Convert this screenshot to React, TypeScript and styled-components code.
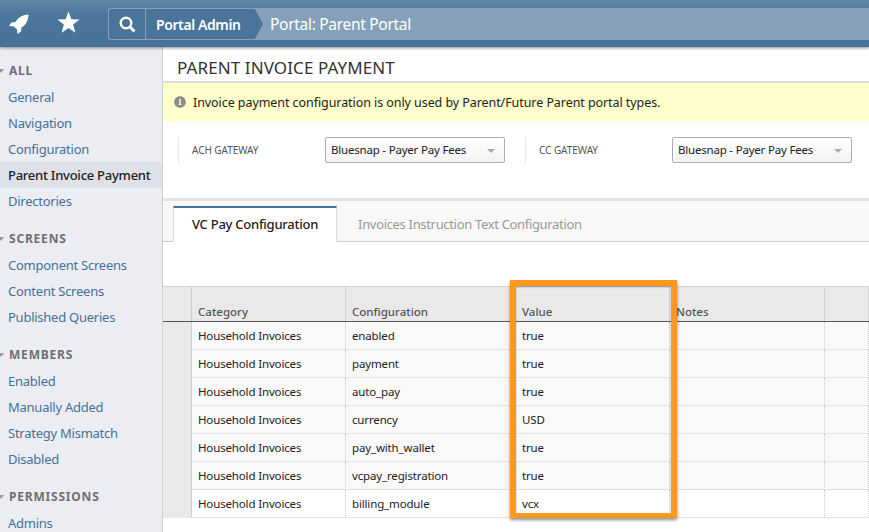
import { FC } from 'react'
import styled, { createGlobalStyle } from 'styled-components'
import { FaInfoCircle } from 'react-icons/fa'

const navGroups = [
  {
    title: 'ALL',
    items: ['General', 'Navigation', 'Configuration', 'Parent Invoice Payment', 'Directories'],
  },
  { title: 'SCREENS', items: ['Component Screens', 'Content Screens', 'Published Queries'] },
  { title: 'MEMBERS', items: ['Enabled', 'Manually Added', 'Strategy Mismatch', 'Disabled'] },
  { title: 'PERMISSIONS', items: ['Admins'] },
]

const rows = [
  ['enabled', 'true'],
  ['payment', 'true'],
  ['auto_pay', 'true'],
  ['currency', 'USD'],
  ['pay_with_wallet', 'true'],
  ['vcpay_registration', 'true'],
  ['billing_module', 'vcx'],
]

const App: FC = () => {
  return (
    <StRoot>
      <GlobalStyle />
      <StTopBar>
        <StTopIcons>
          <svg width="20" height="20" viewBox="0 0 20 20" fill="#fff">
            <path d="M19.5 0.5C14 0.5 9 3.5 6.5 8L2.5 8.5L0 12L5 12.5L8 15.5L8.5 20L12 17.5L12.5 13.5C17 11 19.5 6 19.5 0.5Z" />
          </svg>
          <StStar width="23" height="23" viewBox="0 0 24 24" fill="#fff">
            <polygon points="12,0.5 15,8.7 23.5,8.9 16.8,14.2 19.2,22.8 12,17.8 4.8,22.8 7.2,14.2 0.5,8.9 9,8.7" />
          </StStar>
        </StTopIcons>
        <StCrumbBox>
          <StSearchCell>
            <svg width="17" height="17" viewBox="0 0 17 17" fill="none" stroke="#fff">
              <circle cx="7" cy="7" r="5.3" strokeWidth="2.4" />
              <line x1="11" y1="11" x2="15.5" y2="15.5" strokeWidth="3" />
            </svg>
          </StSearchCell>
          <StCrumbStrong>Portal Admin</StCrumbStrong>
          <StCrumbText>Portal: Parent Portal</StCrumbText>
        </StCrumbBox>
      </StTopBar>
      <StBody>
        <StSidebar>
          {navGroups.map((group) => (
            <StNavGroup key={group.title}>
              <StNavTitle>{group.title}</StNavTitle>
              {group.items.map((item) => (
                <StNavItem key={item} $active={item === 'Parent Invoice Payment'}>
                  {item}
                </StNavItem>
              ))}
            </StNavGroup>
          ))}
        </StSidebar>
        <StMain>
          <StPageTitle>PARENT INVOICE PAYMENT</StPageTitle>
          <StNotice>
            <FaInfoCircle size={12} />
            Invoice payment configuration is only used by Parent/Future Parent portal types.
          </StNotice>
          <StFields>
            <StField>
              <StFieldLabel>ACH GATEWAY</StFieldLabel>
              <StSelect>
                Bluesnap - Payer Pay Fees
                <StCaret />
              </StSelect>
            </StField>
            <StField>
              <StFieldLabel>CC GATEWAY</StFieldLabel>
              <StSelect>
                Bluesnap - Payer Pay Fees
                <StCaret />
              </StSelect>
            </StField>
          </StFields>
          <StTabs>
            <StTab $active>VC Pay Configuration</StTab>
            <StTab>Invoices Instruction Text Configuration</StTab>
          </StTabs>
          <StTableWrap>
            <StHeaderRow>
              <StNumCell />
              <StHeadCell>Category</StHeadCell>
              <StHeadCell>Configuration</StHeadCell>
              <StHeadCell>Value</StHeadCell>
              <StHeadCell>Notes</StHeadCell>
              <StHeadCell />
            </StHeaderRow>
            {rows.map(([config, value], index) => (
              <StRow key={config} $plain={index === rows.length - 1}>
                <StNumCell />
                <StCell>Household Invoices</StCell>
                <StCell>{config}</StCell>
                <StCell>{value}</StCell>
                <StCell />
                <StCell />
              </StRow>
            ))}
            <StHighlight />
          </StTableWrap>
        </StMain>
      </StBody>
    </StRoot>
  )
}

export default App

const GlobalStyle = createGlobalStyle`
  html, body {
    margin: 0;
    height: 100%;
    overflow: hidden;
    background: #fff;
  }
  * {
    box-sizing: border-box;
  }
`

const StRoot = styled.div`
  width: 869px;
  height: 532px;
  overflow: hidden;
  display: flex;
  flex-direction: column;
  font-family: 'Noto Sans', 'Open Sans', sans-serif;
  color: #222;
`

const StTopBar = styled.header`
  height: 47px;
  flex: none;
  display: flex;
  align-items: flex-start;
  padding: 8px 0 0 9px;
  background: linear-gradient(#5f87a8, #4c769b 30%, #47739a);
  box-shadow: 0 1px 3px rgba(0, 0, 0, 0.45);
  position: relative;
  z-index: 2;
`

const StTopIcons = styled.div`
  width: 99px;
  height: 32px;
  display: flex;
  align-items: center;
  gap: 28px;
`

const StStar = styled.svg`
  margin-top: -4px;
`

const StCrumbBox = styled.nav`
  flex: 1;
  height: 32px;
  display: flex;
  align-items: stretch;
  color: #fff;
  background: #86a0b9;
  border: 1px solid #86a0b9;
  border-right: 0;
  border-radius: 3px 0 0 3px;
  overflow: hidden;
`

const StSearchCell = styled.div`
  width: 37px;
  display: flex;
  align-items: center;
  justify-content: center;
  background: #4a7499;
  border-right: 1px solid #86a0b9;
`

const StCrumbStrong = styled.div`
  width: 117px;
  padding-left: 10px;
  display: flex;
  align-items: center;
  font-size: 14px;
  font-weight: 600;
  letter-spacing: -0.4px;
  background: #4a7499;
  clip-path: polygon(0 0, 93% 0, 100% 50%, 93% 100%, 0 100%);
`

const StCrumbText = styled.div`
  padding-left: 7px;
  display: flex;
  align-items: center;
  font-size: 15.5px;
  letter-spacing: -0.3px;
`

const StBody = styled.div`
  flex: 1;
  min-height: 0;
  display: flex;
`

const StSidebar = styled.aside`
  width: 163px;
  flex: none;
  padding-top: 10px;
  background: #ecedf3;
  border-right: 1px solid #cfd0d4;
`

const StNavGroup = styled.section`
  margin-bottom: 11px;
`

const StNavTitle = styled.div`
  position: relative;
  height: 26px;
  margin-bottom: 1px;
  padding-left: 9px;
  line-height: 28px;
  font-size: 12px;
  font-weight: 700;
  letter-spacing: 0.8px;
  color: #707070;

  &::before {
    content: '';
    position: absolute;
    left: -2px;
    top: 12px;
    border-left: 3px solid transparent;
    border-right: 3px solid transparent;
    border-top: 4px solid #9a9a9a;
  }
`

const StNavItem = styled.div<{ $active?: boolean }>`
  height: 26px;
  padding-left: 8px;
  line-height: 26px;
  font-size: 13px;
  white-space: nowrap;
  letter-spacing: -0.25px;
  color: ${({ $active }) => ($active ? '#222' : '#44719a')};
  font-weight: ${({ $active }) => ($active ? 500 : 400)};
  background: ${({ $active }) => ($active ? '#dfe1e8' : 'transparent')};
`

const StMain = styled.main`
  flex: 1;
  min-width: 0;
  display: flex;
  flex-direction: column;
`

const StPageTitle = styled.h1`
  height: 36px;
  margin: 0;
  padding: 8px 0 0 14px;
  line-height: 26px;
  font-size: 17px;
  font-weight: 400;
  letter-spacing: 0.1px;
  color: #333;
  border-bottom: 2px solid #dcdcdc;
`

const StNotice = styled.div`
  height: 38px;
  display: flex;
  align-items: center;
  gap: 7px;
  padding-left: 11px;
  font-size: 12.5px;
  letter-spacing: -0.07px;
  background: #ffffcb;

  svg {
    color: #8c8c8c;
  }
`

const StFields = styled.div`
  height: 77px;
  flex: none;
  display: flex;
  padding: 16px 0 0 15px;
  gap: 20px;
`

const StField = styled.div`
  width: 327px;
  height: 26px;
  display: flex;
  align-items: center;
  justify-content: space-between;
  border-left: 1px solid #e8e8e8;
  padding-left: 13px;
`

const StFieldLabel = styled.span`
  font-size: 10px;
  letter-spacing: -0.05px;
  color: #555;
`

const StSelect = styled.div`
  position: relative;
  width: 180px;
  height: 26px;
  padding-left: 5px;
  line-height: 24px;
  font-size: 11.5px;
  letter-spacing: -0.2px;
  color: #222;
  background: linear-gradient(#fff, #f3f3f3);
  border: 1px solid #adadad;
  border-radius: 2px;
`

const StCaret = styled.span`
  position: absolute;
  right: 9px;
  top: 11px;
  border-left: 4px solid transparent;
  border-right: 4px solid transparent;
  border-top: 4px solid #aaa;
`

const StTabs = styled.div`
  height: 44px;
  flex: none;
  display: flex;
  padding: 5px 0 0 10px;
  background: #f8f8f8;
  border-top: 3px solid #e2e2e2;
  border-bottom: 1px solid #ccc;
`

const StTab = styled.div<{ $active?: boolean }>`
  height: ${({ $active }) => ($active ? '36px' : '35px')};
  padding: 0 ${({ $active }) => ($active ? '18px' : '20px')};
  line-height: 33px;
  font-size: 13px;
  letter-spacing: ${({ $active }) => ($active ? '-0.25px' : '-0.33px')};
  font-weight: ${({ $active }) => ($active ? 500 : 400)};
  color: ${({ $active }) => ($active ? '#222' : '#999')};
  background: ${({ $active }) => ($active ? '#fff' : 'transparent')};
  border-top: 2px solid ${({ $active }) => ($active ? '#44719a' : 'transparent')};
  border-left: 1px solid ${({ $active }) => ($active ? '#ddd' : 'transparent')};
  border-right: 1px solid ${({ $active }) => ($active ? '#ddd' : 'transparent')};
`

const StTableWrap = styled.div`
  position: relative;
  margin-top: 44px;
  border-top: 1px solid #d4d4d4;
`

const columns = '29px 154px 170px 154px 155px 44px'

const StHeaderRow = styled.div`
  display: grid;
  grid-template-columns: ${columns};
  height: 35px;
  background: #e9e9e9;
  border-bottom: 1px solid #555;
`

const StRow = styled.div<{ $plain?: boolean }>`
  display: grid;
  grid-template-columns: ${columns};
  height: 28px;
  background: ${({ $plain }) => ($plain ? '#fff' : '#f9f9f9')};
  border-bottom: 1px solid #e2e2e2;
`

const StNumCell = styled.div`
  background: #e9e9e9;
  border-right: 1px solid #cfcfcf;
`

const StHeadCell = styled.div`
  padding: 16px 0 0 6px;
  line-height: 17px;
  font-size: 11.5px;
  font-weight: 500;
  color: #555;
  border-right: 1px solid #d4d4d4;
`

const StCell = styled.div`
  padding-left: 6px;
  line-height: 28px;
  font-size: 11.5px;
  letter-spacing: -0.15px;
  color: #222;
  border-right: 1px dotted #ccc;
`

const StHighlight = styled.div`
  position: absolute;
  left: 347px;
  top: -7px;
  width: 167px;
  height: 238px;
  border: 6px solid #fa981f;
  border-bottom-width: 5px;
  box-shadow: 0 2px 3px rgba(0, 0, 0, 0.45), inset 0 1px 2px rgba(0, 0, 0, 0.35);
`
